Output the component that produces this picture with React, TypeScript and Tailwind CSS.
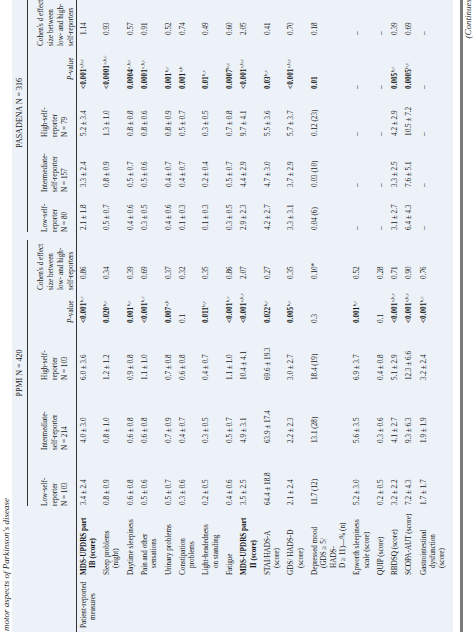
import React from "react"

// p-value cell: value, superscript, bold
type P = { v: string; s?: string; b?: boolean }
type Cell = string | P

const p = (v: string, s?: string, b = true): P => ({ v, s, b })

const rows: { label: string[]; bold?: boolean; cells: Cell[] }[] = [
  {
    label: ["MDS-UPDRS part", "IB (score)"],
    bold: true,
    cells: ["3.4 ± 2.4", "4.0 ± 3.0", "6.0 ± 3.6", p("<0.001", "b,c"), "0.86", "2.1 ± 1.8", "3.3 ± 2.4", "5.2 ± 3.4", p("<0.001", "a,b,c"), "1.14"],
  },
  {
    label: ["Sleep problems", "(night)"],
    cells: ["0.8 ± 0.9", "0.8 ± 1.0", "1.2 ± 1.2", p("0.020", "b,c"), "0.34", "0.5 ± 0.7", "0.8 ± 0.9", "1.3 ± 1.0", p("<0.0001", "a,b,c"), "0.93"],
  },
  {
    label: ["Daytime sleepiness"],
    cells: ["0.6 ± 0.8", "0.6 ± 0.8", "0.9 ± 0.8", p("0.001", "b,c"), "0.39", "0.4 ± 0.6", "0.5 ± 0.7", "0.8 ± 0.8", p("0.0004", "a,b,c"), "0.57"],
  },
  {
    label: ["Pain and other", "sensations"],
    cells: ["0.5 ± 0.6", "0.6 ± 0.8", "1.1 ± 1.0", p("<0.001", "b,c"), "0.69", "0.3 ± 0.5", "0.5 ± 0.6", "0.8 ± 0.6", p("0.0001", "a,b,c"), "0.91"],
  },
  {
    label: ["Urinary problems"],
    cells: ["0.5 ± 0.7", "0.7 ± 0.9", "0.7 ± 0.8", p("0.007", "a,b"), "0.37", "0.4 ± 0.6", "0.4 ± 0.7", "0.8 ± 0.9", p("0.001", "b,c"), "0.52"],
  },
  {
    label: ["Constipation", "problems"],
    cells: ["0.3 ± 0.6", "0.4 ± 0.7", "0.6 ± 0.8", p("0.1", undefined, false), "0.32", "0.1 ± 0.3", "0.4 ± 0.7", "0.5 ± 0.7", p("0.001", "a,b"), "0.74"],
  },
  {
    label: ["Light-headedness", "on standing"],
    cells: ["0.2 ± 0.5", "0.3 ± 0.5", "0.4 ± 0.7", p("0.011", "b,c"), "0.35", "0.1 ± 0.3", "0.2 ± 0.4", "0.3 ± 0.5", p("0.01", "b,c"), "0.49"],
  },
  {
    label: ["Fatigue"],
    cells: ["0.4 ± 0.6", "0.5 ± 0.7", "1.1 ± 1.0", p("<0.001", "b,c"), "0.86", "0.3 ± 0.5", "0.5 ± 0.7", "0.7 ± 0.8", p("0.0007", "b,c"), "0.60"],
  },
  {
    label: ["MDS-UPDRS part", "II (score)"],
    bold: true,
    cells: ["3.5 ± 2.5", "4.9 ± 3.1", "10.4 ± 4.1", p("<0.001", "a,b,c"), "2.07", "2.9 ± 2.3", "4.4 ± 2.9", "9.7 ± 4.1", p("<0.001", "a,b,c"), "2.05"],
  },
  {
    label: ["STAI/HADS-A", "(score)"],
    cells: ["64.4 ± 18.8", "63.9 ± 17.4", "69.6 ± 19.3", p("0.022", "b,c"), "0.27", "4.2 ± 2.7", "4.7 ± 3.0", "5.5 ± 3.6", p("0.03", "b,c"), "0.41"],
  },
  {
    label: ["GDS/ HADS-D", "(score)"],
    cells: ["2.1 ± 2.4", "2.2 ± 2.3", "3.0 ± 2.7", p("0.005", "b,c"), "0.35", "3.3 ± 3.1", "3.7 ± 2.9", "5.7 ± 3.7", p("<0.001", "a,b,c"), "0.70"],
  },
  {
    label: ["Depressed mood", "(GDS ≥ 5/", "HADS-", "D ≥ 11)—% (n)"],
    cells: ["11.7 (12)", "13.1 (28)", "18.4 (19)", p("0.3", undefined, false), "0.10*", "0.04 (6)", "0.03 (10)", "0.12 (23)", p("0.01"), "0.18"],
  },
  {
    label: ["Epworth sleepiness", "scale (score)"],
    cells: ["5.2 ± 3.0", "5.6 ± 3.5", "6.9 ± 3.7", p("0.001", "b,c"), "0.52", "–", "–", "–", "–", "–"],
  },
  {
    label: ["QUIP (score)"],
    cells: ["0.2 ± 0.5", "0.3 ± 0.6", "0.4 ± 0.8", p("0.1", undefined, false), "0.28", "–", "–", "–", "–", "–"],
  },
  {
    label: ["RBDSQ (score)"],
    cells: ["3.2 ± 2.2", "4.1 ± 2.7", "5.1 ± 2.9", p("<0.001", "a,b,c"), "0.71", "3.1 ± 2.7", "3.3 ± 2.5", "4.2 ± 2.9", p("0.005", "b,c"), "0.39"],
  },
  {
    label: ["SCOPA-AUT (score)"],
    cells: ["7.2 ± 4.3", "9.3 ± 6.3", "12.3 ± 6.6", p("<0.001", "a,b,c"), "0.90", "6.4 ± 4.3", "7.6 ± 5.1", "10.5 ± 7.2", p("0.0005", "b,c"), "0.69"],
  },
  {
    label: ["Gastrointestinal", "dysfunction", "(score)"],
    cells: ["1.7 ± 1.7", "1.9 ± 1.9", "3.2 ± 2.4", p("<0.001", "b,c"), "0.76", "–", "–", "–", "–", "–"],
  },
]

// left padding of the value in each data column
const valuePad = ["pl-[3px]", "pl-[9px]", "pl-[2px]", "pl-[2px]", "pl-[13px]", "pl-[4px]", "pl-[7px]", "pl-[3px]", "pl-[1px]", "pl-[13px]"]

function Value({ c }: { c: Cell }) {
  if (typeof c === "string") return <>{c}</>
  return (
    <span className={c.b ? "font-bold" : ""}>
      {c.v}
      {c.s && <sup className="relative -top-[3px] align-baseline text-[4.8px] leading-[0] font-normal ml-[0.5px]">{c.s}</sup>}
    </span>
  )
}

function Lines({ lines }: { lines: string[] }) {
  return (
    <>
      {lines.map((l, i) => (
        <React.Fragment key={i}>
          {i > 0 && <br />}
          {l}
        </React.Fragment>
      ))}
    </>
  )
}

const ppmiHeads = [
  ["Low-self-", "reporter", "N = 103"],
  ["Intermediate-", "self-reporter", "N = 214"],
  ["High-self-", "reporter", "N = 103"],
]
const pasHeads = [
  ["Low-self-", "reporter", "N = 80"],
  ["Intermediate-", "self-reporter", "N = 157"],
  ["High-self-", "reporter", "N = 79"],
]
const cohen = ["Cohen's d effect", "size between", "low- and high-", "self-reporters"]

function HeadCells({ heads, pPad }: { heads: string[][]; pPad: string }) {
  return (
    <>
      {heads.map((h, i) => (
        <th key={i} className="font-normal text-left align-top pl-[2px] pt-[12px] whitespace-nowrap">
          <Lines lines={h} />
        </th>
      ))}
      <th className={`font-normal text-left align-top pt-[38px] whitespace-nowrap ${pPad}`}>
        <i>P</i>-value
      </th>
      <th className="font-normal text-left align-top pl-[2px] pt-[8px] whitespace-nowrap">
        <Lines lines={cohen} />
      </th>
    </>
  )
}

const cellPad = "align-top pt-[2.6px] pb-[2.4px]"

export default function App() {
  return (
    <div className="w-[474px] h-[632px] overflow-hidden bg-white">
      <div
        className="w-[632px] h-[474px] origin-top-left -rotate-90 translate-y-[632px] flex flex-col text-[#141414]"
        style={{ fontFamily: '"Liberation Serif", "Times New Roman", serif' }}
      >
        {/* running head */}
        <div className="h-[12px] shrink-0 pl-[1px] pt-[1px] text-[9px] leading-[10px] italic text-[#2a2a2a]">
          motor aspects of Parkinson's disease
        </div>

        {/* table panel */}
        <div className="h-[441px] shrink-0 bg-[#edf2f8] overflow-hidden">
          <table className="table-fixed border-collapse w-[650px] text-[7.2px] leading-[9.3px]">
            <colgroup>
              <col className="w-[56px]" />
              <col className="w-[68px]" />
              <col className="w-[56px]" />
              <col className="w-[70px]" />
              <col className="w-[57px]" />
              <col className="w-[33px]" />
              <col className="w-[58px]" />
              <col className="w-[40px]" />
              <col className="w-[55px]" />
              <col className="w-[49px]" />
              <col className="w-[42px]" />
              <col className="w-[66px]" />
            </colgroup>
            <thead>
              <tr>
                <th colSpan={2} />
                <th colSpan={5} className="font-normal pt-[3px] text-[8px]">
                  <div className="border-b border-[#333] ml-[2px] mr-[6px] pb-[2px] text-center leading-[10px]">PPMI N = 420</div>
                </th>
                <th colSpan={5} className="font-normal pt-[3px] text-[8px]">
                  <div className="border-b border-[#333] ml-[2px] pb-[2px] pr-[12px] text-center leading-[10px]">PASADENA N = 316</div>
                </th>
              </tr>
              <tr className="border-b border-[#333] leading-[10px]">
                <th colSpan={2} className="h-[48px]" />
                <HeadCells heads={ppmiHeads} pPad="pl-[2px]" />
                <HeadCells heads={pasHeads} pPad="pl-[10px]" />
              </tr>
            </thead>
            <tbody>
              {rows.map((r, i) => (
                <tr key={i}>
                  <td className={`${cellPad} pl-[12px] -indent-[8px] whitespace-nowrap`}>
                    {i === 0 && <Lines lines={["Patient-reported", "measures"]} />}
                  </td>
                  <td className={`${cellPad} pl-[8px] -indent-[7px] whitespace-nowrap ${r.bold ? "font-bold" : ""}`}>
                    <Lines lines={r.label} />
                  </td>
                  {r.cells.map((c, j) => (
                    <td key={j} className={`${cellPad} whitespace-nowrap ${valuePad[j]}`}>
                      <Value c={c} />
                    </td>
                  ))}
                </tr>
              ))}
            </tbody>
          </table>
        </div>

        {/* page rule */}
        <div className="mt-[7px] h-[3px] shrink-0 bg-[#7b7b7b]" />

        <div className="flex justify-end -mr-[4px] text-[9px] leading-[10px] italic text-[#2a2a2a]">
          (Continues)
        </div>
      </div>
    </div>
  )
}
